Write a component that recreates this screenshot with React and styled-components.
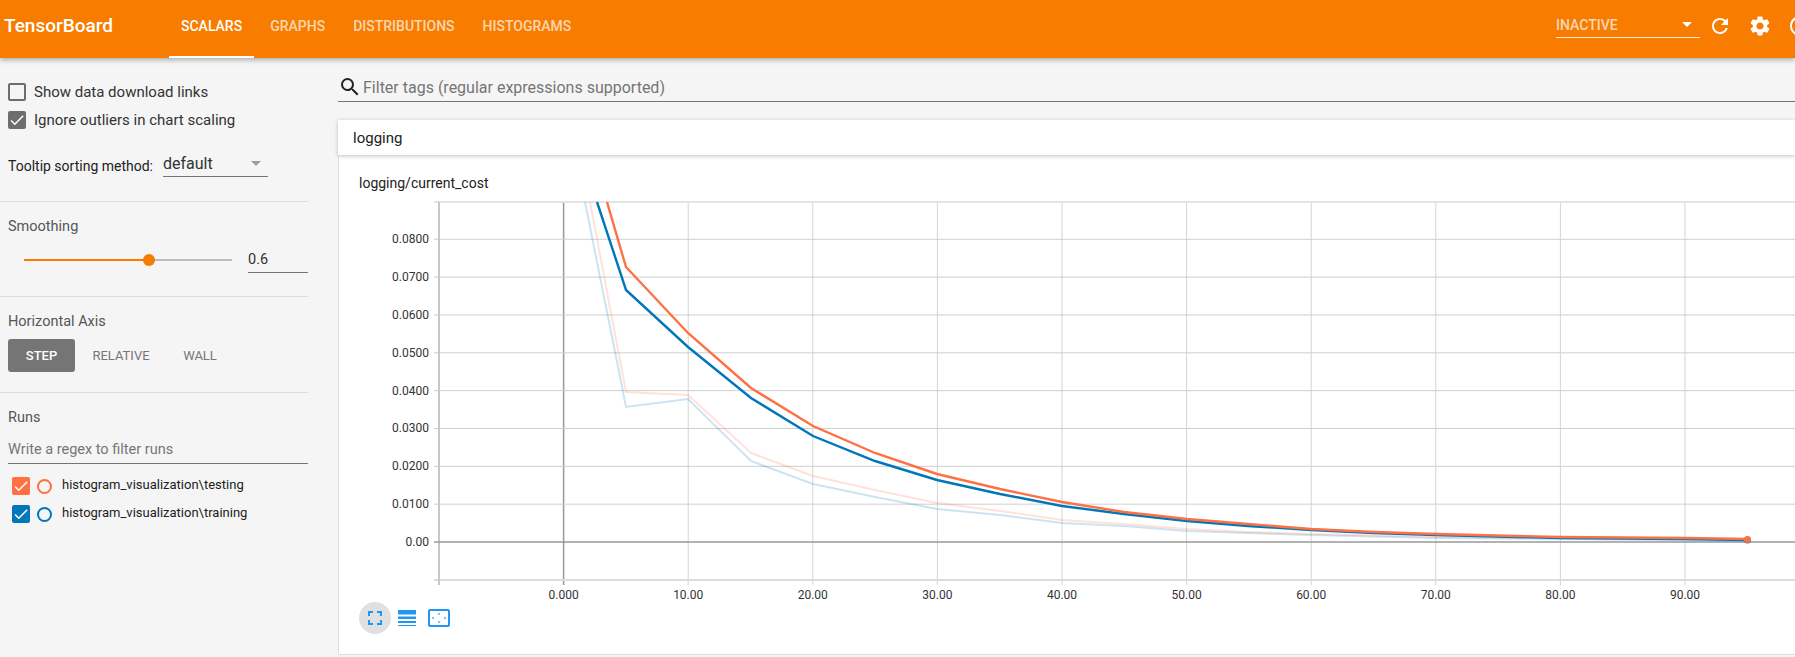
import React from 'react';
import styled, { createGlobalStyle } from 'styled-components';
import { MdRefresh, MdSettings, MdInfoOutline, MdSearch, MdCheck, MdFullscreen } from 'react-icons/md';

const ORANGE = '#f77c00';
const RUN_ORANGE = '#ff7043';
const RUN_BLUE = '#0077bb';

const GlobalStyle = createGlobalStyle`
    html, body {
        margin:0;
        padding:0;
        background-color:#f5f5f5;
        font-family:Roboto, "Liberation Sans", sans-serif;
        color:#212121;
    }
`;

const Page = styled.div`
    width:1795px;
    height:657px;
    overflow:hidden;
    display:flex;
    flex-direction:column;
`;

const Header = styled.header`
    flex:none;
    height:58px;
    display:flex;
    background-color:${ORANGE};
    color:white;
    box-shadow:0 2px 5px rgba(0,0,0,0.3);
    position:relative;
    z-index:2;
    overflow:hidden;
`;

const Title = styled.div`
    flex:none;
    width:169px;
    padding-left:4px;
    box-sizing:border-box;
    line-height:52px;
    font-size:19px;
    font-weight:500;
`;

const Tabs = styled.nav`
    flex:1;
    display:flex;
    gap:4px;
`;

const Tab = styled.div`
    padding:0 12px;
    line-height:52px;
    font-size:14px;
    font-weight:500;
    box-sizing:border-box;
    height:58px;
    color:${props => props.$active ? 'white' : 'rgba(255,255,255,0.7)'};
    border-bottom:2px solid ${props => props.$active ? 'white' : 'transparent'};
`;

const HeaderTools = styled.div`
    flex:none;
    width:239px;
    display:flex;
`;

const RunState = styled.div`
    flex:none;
    width:144px;
    height:38px;
    display:flex;
    justify-content:space-between;
    align-items:center;
    padding:12px 8px 0 0;
    box-sizing:border-box;
    border-bottom:1px solid rgba(255,255,255,0.85);
    font-size:14px;
    font-weight:500;
    color:rgba(255,255,255,0.7);
`;

const Caret = styled.span`
    width:0;
    height:0;
    border-left:5px solid transparent;
    border-right:5px solid transparent;
    border-top:5px solid ${props => props.$color};
`;

const ToolButton = styled.div`
    flex:none;
    width:40px;
    height:52px;
    display:flex;
    align-items:center;
    justify-content:center;
    font-size:24px;
`;

const Body = styled.div`
    flex:1;
    display:flex;
    min-height:0;
`;

const Sidebar = styled.aside`
    flex:none;
    width:338px;
    font-size:15px;
`;

const Section = styled.section`
    width:308px;
    height:${props => props.$height}px;
    box-sizing:border-box;
    padding:${props => props.$top}px 0 0 8px;
    border-bottom:${props => props.$last ? 'none' : '1px solid #dcdcdc'};
`;

const CheckRow = styled.label`
    display:flex;
    align-items:center;
    gap:8px;
    height:18px;
    margin-bottom:10px;
    color:#333;
`;

const Box = styled.span`
    flex:none;
    width:18px;
    height:18px;
    box-sizing:border-box;
    border-radius:2px;
    border:2px solid ${props => props.$color};
    background-color:${props => props.$checked ? props.$color : 'transparent'};
    color:white;
    display:flex;
    align-items:center;
    justify-content:center;
    font-size:18px;

    svg{
        flex:none;
    }
`;

const SortRow = styled.div`
    display:flex;
    align-items:flex-end;
    margin-top:17px;
    font-size:14px;
`;

const SortLabel = styled.span`
    width:155px;
    line-height:20px;
    padding-bottom:1px;
`;

const SortSelect = styled.div`
    width:105px;
    height:31px;
    box-sizing:border-box;
    border-bottom:1px solid #757575;
    display:flex;
    justify-content:space-between;
    align-items:center;
    padding:4px 7px 0 0;
    font-size:16px;
    color:#333;
`;

const SectionTitle = styled.div`
    font-size:14.5px;
    line-height:20px;
    color:#555;
`;

const SliderRow = styled.div`
    display:flex;
    align-items:center;
    margin-top:10px;
    padding-left:16px;
`;

const SliderTrack = styled.div`
    position:relative;
    width:208px;
    height:2px;
    background-color:#bdbdbd;
`;

const SliderFill = styled.div`
    height:100%;
    background-color:${ORANGE};
`;

const SliderKnob = styled.span`
    position:absolute;
    top:-5px;
    width:12px;
    height:12px;
    margin-left:-6px;
    border-radius:50%;
    background-color:${ORANGE};
`;

const SliderValue = styled.div`
    width:60px;
    height:24px;
    margin:2px 0 0 16px;
    box-sizing:border-box;
    border-bottom:1px solid #757575;
    font-size:14.5px;
    line-height:21px;
    color:#333;
`;

const AxisButtons = styled.div`
    display:flex;
    align-items:center;
    margin-top:7px;
`;

const AxisButton = styled.div`
    width:${props => props.$width}px;
    height:33px;
    line-height:33px;
    text-align:center;
    font-size:13px;
    font-weight:${props => props.$active ? 500 : 400};
    border-radius:3px;
    color:${props => props.$active ? 'white' : '#757575'};
    background-color:${props => props.$active ? '#757575' : 'transparent'};
`;

const RunFilter = styled.input`
    display:block;
    width:300px;
    height:26px;
    margin-top:10px;
    padding:0 0 3px 0;
    box-sizing:border-box;
    border:none;
    border-bottom:1px solid #757575;
    outline:none;
    background:transparent;
    font-family:inherit;
    font-size:14.5px;
    &::placeholder{
        color:#757575;
        opacity:1;
    }
`;

const RunList = styled.div`
    margin:13px 0 0 4px;
`;

const RunRow = styled.div`
    display:flex;
    align-items:center;
    height:18px;
    margin-bottom:10px;
    font-size:13px;
    color:#212121;
`;

const RunCircle = styled.span`
    flex:none;
    width:15px;
    height:15px;
    margin:0 10px 0 7px;
    box-sizing:border-box;
    border-radius:50%;
    border:2px solid ${props => props.$color};
`;

const RunName = styled.span`
    position:relative;
    top:-2px;
`;

const Main = styled.main`
    flex:1;
    min-width:0;
`;

const FilterBar = styled.div`
    height:43.5px;
    box-sizing:border-box;
    padding:16px 0 0 0;
    display:flex;
    align-items:center;
    border-bottom:1px solid #757575;
    font-size:24px;
    color:#212121;
`;

const FilterInput = styled.input`
    flex:1;
    margin-left:1px;
    border:none;
    outline:none;
    padding:0;
    background:transparent;
    font-family:inherit;
    font-size:16px;
    &::placeholder{
        color:#757575;
        opacity:1;
    }
`;

const CategoryBar = styled.div`
    height:35px;
    margin-top:18.5px;
    padding-left:15px;
    background-color:white;
    font-size:15px;
    line-height:36px;
    color:#212121;
    box-shadow:0 1px 4px rgba(0,0,0,0.25);
    position:relative;
`;

const ChartCard = styled.div`
    height:500px;
    background-color:white;
    border-left:1px solid #e0e0e0;
    border-bottom:1px solid #e0e0e0;
    box-sizing:border-box;
`;

const ChartTitle = styled.div`
    padding:19px 0 0 20px;
    font-size:14px;
    line-height:18px;
    color:#212121;
`;

const Chart = styled.svg`
    display:block;
    width:1457px;
    height:410px;
    font-family:Roboto, "Liberation Sans", sans-serif;
    font-size:12px;
    fill:#333;
`;

const ChartTools = styled.div`
    display:flex;
    align-items:center;
    margin-left:20px;
`;

const ChartTool = styled.div`
    flex:none;
    width:32px;
    height:32px;
    display:flex;
    align-items:center;
    justify-content:center;
    border-radius:50%;
    font-size:24px;
    color:#2196f3;
    background-color:${props => props.$active ? '#e0e0e0' : 'transparent'};
`;

const TABS = ['Scalars', 'Graphs', 'Distributions', 'Histograms'];

const X_STEP = 124.6;
const X_ZERO = 563.6;
const Y_STEP = 37.84;
const Y_ZERO = 542;
const X_TICKS = [0, 1, 2, 3, 4, 5, 6, 7, 8, 9];
const Y_TICKS = [1, 2, 3, 4, 5, 6, 7, 8];

const CURVES = [
    { color: RUN_BLUE, opacity: 0.2, points: '585,202 626,407 688,399 751,461 813,484 875,497 937,509 1000,515 1062,523 1124,526 1187,531 1248,533 1311,535 1436,538 1560,539 1747,541' },
    { color: RUN_ORANGE, opacity: 0.2, points: '590,202 626,392 688,395 751,453 813,476 875,490 937,503 1000,511 1062,520 1124,524 1187,529 1248,532 1311,534 1436,537 1560,538 1747,540' },
    { color: RUN_BLUE, opacity: 1, points: '597,202 626,290 688,347 751,398 813,436 875,461 937,480 1000,494 1062,506 1124,514 1187,521 1248,526 1311,530 1374,533 1436,535 1560,538 1686,539 1747,540' },
    { color: RUN_ORANGE, opacity: 1, points: '607,202 626,267 688,333 751,388 813,426 875,453 937,474 1000,489 1062,502 1124,512 1187,519 1248,524 1311,529 1374,532 1436,534 1560,537 1686,538 1747,539' },
];

const CurrentCostChart = () => (
    <Chart viewBox="339 192 1457 410">
        {X_TICKS.map(i => (
            <g key={i}>
                <line
                    x1={X_ZERO + i * X_STEP}
                    x2={X_ZERO + i * X_STEP}
                    y1="202"
                    y2="585"
                    stroke={i === 0 ? '#999' : '#d4d4d4'}
                    strokeWidth={i === 0 ? 1.5 : 1}
                />
                <text x={X_ZERO + i * X_STEP} y="599" textAnchor="middle">
                    {i === 0 ? '0.000' : `${i * 10}.00`}
                </text>
            </g>
        ))}
        {Y_TICKS.map(i => (
            <g key={i}>
                <line x1="434" x2="1795" y1={Y_ZERO - i * Y_STEP} y2={Y_ZERO - i * Y_STEP} stroke="#cfcfcf" />
                <text x="429" y={Y_ZERO - i * Y_STEP + 4} textAnchor="end">{`0.0${i}00`}</text>
            </g>
        ))}
        <line x1="434" x2="1795" y1="202" y2="202" stroke="#e4e4e4" strokeWidth="2" />
        <line x1="434" x2="1795" y1="580" y2="580" stroke="#dcdcdc" strokeWidth="2" />
        <line x1="439" x2="439" y1="202" y2="585" stroke="#c8c8c8" strokeWidth="2" />
        <line x1="434" x2="1795" y1={Y_ZERO} y2={Y_ZERO} stroke="#999" strokeWidth="1.5" />
        <text x="429" y={Y_ZERO + 4} textAnchor="end">0.00</text>
        {CURVES.map(curve => (
            <polyline
                key={curve.color + curve.opacity}
                points={curve.points}
                fill="none"
                stroke={curve.color}
                strokeOpacity={curve.opacity}
                strokeWidth={curve.opacity === 1 ? 2.4 : 2}
            />
        ))}
        <circle cx="1747.5" cy="540" r="3.5" fill={RUN_BLUE} />
        <circle cx="1747.5" cy="539.5" r="3.5" fill={RUN_ORANGE} />
    </Chart>
);

const LinesIcon = () => (
    <svg width="18" height="16" viewBox="0 0 18 16" fill="currentColor">
        <rect width="18" height="4.5" />
        <rect y="6.5" width="18" height="2.5" />
        <rect y="11" width="18" height="2" />
        <rect y="15" width="18" height="1" />
    </svg>
);

const FitIcon = () => (
    <svg width="22" height="18" viewBox="0 0 22 18" fill="currentColor">
        <rect x="1" y="1" width="20" height="16" rx="1" fill="none" stroke="currentColor" strokeWidth="2" />
        <path d="M9.5 5.5 L11 3.8 L12.5 5.5 Z M9.5 12.5 L11 14.2 L12.5 12.5 Z M5.5 7.5 L3.8 9 L5.5 10.5 Z M16.5 7.5 L18.2 9 L16.5 10.5 Z" />
    </svg>
);

const App = () => {
    return (
        <Page>
            <GlobalStyle />
            <Header>
                <Title>TensorBoard</Title>
                <Tabs>
                    {TABS.map((tab, i) => <Tab key={tab} $active={i === 0}>{tab.toUpperCase()}</Tab>)}
                </Tabs>
                <HeaderTools>
                    <RunState>INACTIVE<Caret $color="white" /></RunState>
                    <ToolButton><MdRefresh /></ToolButton>
                    <ToolButton><MdSettings /></ToolButton>
                    <ToolButton><MdInfoOutline /></ToolButton>
                </HeaderTools>
            </Header>
            <Body>
                <Sidebar>
                    <Section $height={144} $top={25}>
                        <CheckRow><Box $color="#6e6e6e" />Show data download links</CheckRow>
                        <CheckRow><Box $color="#6e6e6e" $checked><MdCheck /></Box>Ignore outliers in chart scaling</CheckRow>
                        <SortRow>
                            <SortLabel>Tooltip sorting method:</SortLabel>
                            <SortSelect>default<Caret $color="#9e9e9e" /></SortSelect>
                        </SortRow>
                    </Section>
                    <Section $height={95} $top={15}>
                        <SectionTitle>Smoothing</SectionTitle>
                        <SliderRow>
                            <SliderTrack>
                                <SliderFill style={{ width: '60%' }} />
                                <SliderKnob style={{ left: '60%' }} />
                            </SliderTrack>
                            <SliderValue>0.6</SliderValue>
                        </SliderRow>
                    </Section>
                    <Section $height={96} $top={15}>
                        <SectionTitle>Horizontal Axis</SectionTitle>
                        <AxisButtons>
                            <AxisButton $active $width={67}>STEP</AxisButton>
                            <AxisButton $width={92}>RELATIVE</AxisButton>
                            <AxisButton $width={66}>WALL</AxisButton>
                        </AxisButtons>
                    </Section>
                    <Section $height={200} $top={15} $last>
                        <SectionTitle>Runs</SectionTitle>
                        <RunFilter placeholder="Write a regex to filter runs" />
                        <RunList>
                            <RunRow>
                                <Box $color={RUN_ORANGE} $checked><MdCheck /></Box>
                                <RunCircle $color={RUN_ORANGE} />
                                <RunName>histogram_visualization\testing</RunName>
                            </RunRow>
                            <RunRow>
                                <Box $color={RUN_BLUE} $checked><MdCheck /></Box>
                                <RunCircle $color={RUN_BLUE} />
                                <RunName>histogram_visualization\training</RunName>
                            </RunRow>
                        </RunList>
                    </Section>
                </Sidebar>
                <Main>
                    <FilterBar>
                        <MdSearch />
                        <FilterInput placeholder="Filter tags (regular expressions supported)" />
                    </FilterBar>
                    <CategoryBar>logging</CategoryBar>
                    <ChartCard>
                        <ChartTitle>logging/current_cost</ChartTitle>
                        <CurrentCostChart />
                        <ChartTools>
                            <ChartTool $active><MdFullscreen /></ChartTool>
                            <ChartTool><LinesIcon /></ChartTool>
                            <ChartTool><FitIcon /></ChartTool>
                        </ChartTools>
                    </ChartCard>
                </Main>
            </Body>
        </Page>
    );
};

export default App;
